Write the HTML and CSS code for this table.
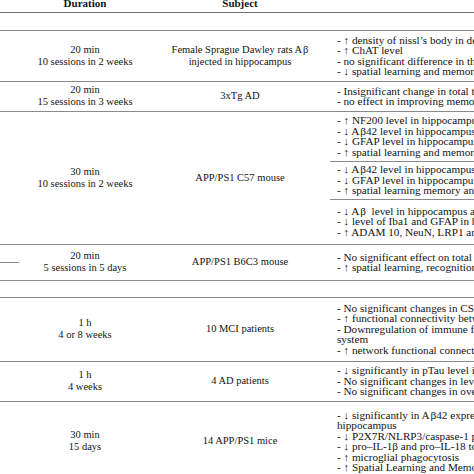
FILE: index.html
```html
<!DOCTYPE html>
<html>
<head>
<meta charset="utf-8">
<link rel="stylesheet" href="styles.css">
</head>
<body>
<table class="tbl">
  <colgroup>
    <col class="c0"><col class="c1"><col class="c2"><col class="c3">
  </colgroup>
  <tr class="h-head">
    <th></th><th>Duration</th><th>Subject</th><th>Results</th>
  </tr>
  <tr class="h-sec sec"><td></td><td></td><td></td><td></td></tr>
  <tr class="h-r1 row">
    <td></td>
    <td class="mid">20 min<br>10 sessions in 2 weeks</td>
    <td class="mid">Female Sprague Dawley rats A&#8202;β<br>injected in hippocampus</td>
    <td class="res">
      <div>- ↑ density of nissl’s body in dentate gyrus</div>
      <div>- ↑ ChAT level</div>
      <div>- no significant difference in the number of neurons</div>
      <div>- ↓ spatial learning and memory impairment</div>
    </td>
  </tr>
  <tr class="h-r2 row sep">
    <td></td>
    <td class="mid">20 min<br>15 sessions in 3 weeks</td>
    <td class="mid">3xTg AD</td>
    <td class="res">
      <div>- Insignificant change in total tau level</div>
      <div>- no effect in improving memory</div>
    </td>
  </tr>
  <tr class="h-r3a row sep">
    <td rowspan="3"></td>
    <td rowspan="3" class="mid">30 min<br>10 sessions in 2 weeks</td>
    <td rowspan="3" class="mid">APP/PS1 C57 mouse</td>
    <td class="res">
      <div>- ↑ NF200 level in hippocampus</div>
      <div>- ↓ A&#8202;β42 level in hippocampus</div>
      <div>- ↓ GFAP level in hippocampus</div>
      <div>- ↑ spatial learning and memory</div>
    </td>
  </tr>
  <tr class="h-r3b">
    <td class="res sub">
      <div>- ↓ A&#8202;β42 level in hippocampus</div>
      <div>- ↓ GFAP level in hippocampus</div>
      <div>- ↑ spatial learning memory and</div>
    </td>
  </tr>
  <tr class="h-r3c">
    <td class="res sub">
      <div>- ↓ A&#8202;β&nbsp; level in hippocampus and cortex</div>
      <div>- ↓ level of Iba1 and GFAP in hippocampus</div>
      <div>- ↑ ADAM 10, NeuN, LRP1 and</div>
    </td>
  </tr>
  <tr class="h-r4 row sep">
    <td><div class="dash"></div></td>
    <td class="mid">20 min<br>5 sessions in 5 days</td>
    <td class="mid">APP/PS1 B6C3 mouse</td>
    <td class="res">
      <div>- No significant effect on total A&#8202;β</div>
      <div>- ↑ spatial learning, recognition memory</div>
    </td>
  </tr>
  <tr class="h-sec2 sec sep"><td></td><td></td><td></td><td></td></tr>
  <tr class="h-r5 row sep">
    <td></td>
    <td class="mid">1 h<br>4 or 8 weeks</td>
    <td class="mid">10 MCI patients</td>
    <td class="res">
      <div>- No significant changes in CSF biomarkers</div>
      <div>- ↑ functional connectivity between</div>
      <div>- Downregulation of immune factors in the immune</div>
      <div>system</div>
      <div>- ↑ network functional connectivity</div>
    </td>
  </tr>
  <tr class="h-r6 row sep">
    <td></td>
    <td class="mid">1 h<br>4 weeks</td>
    <td class="mid">4 AD patients</td>
    <td class="res">
      <div>- ↓ significantly in pTau level in CSF</div>
      <div>- No significant changes in level of</div>
      <div>- No significant changes in overall</div>
    </td>
  </tr>
  <tr class="h-r7 row sep">
    <td></td>
    <td class="mid">30 min<br>15 days</td>
    <td class="mid">14 APP/PS1 mice</td>
    <td class="res">
      <div>- ↓ significantly in A&#8202;β42 expression in the</div>
      <div>hippocampus</div>
      <div>- ↓ P2X7R/NLRP3/caspase-1 pathway</div>
      <div>- ↓ pro–IL-1β and pro–IL-18 to</div>
      <div>- ↑ microglial phagocytosis</div>
      <div>- ↑ Spatial Learning and Memory</div>
    </td>
  </tr>
</table>
</body>
</html>
```

FILE: styles.css
```css
html, body {
  margin: 0;
  padding: 0;
  background: #ffffff;
}
body {
  width: 474px;
  height: 474px;
  overflow: hidden;
  font-family: "Liberation Serif", "DejaVu Serif", serif;
  font-size: 10.5px;
  color: #141414;
}
.tbl {
  border-collapse: collapse;
  table-layout: fixed;
  width: 730px;
  margin-top: -5px;
}
.c0 { width: 20px; }
.c1 { width: 130px; }
.c2 { width: 180px; }
.c3 { width: 400px; }
th, td {
  padding: 0;
  vertical-align: middle;
}
th {
  font-weight: bold;
  text-align: center;
  font-size: 11px;
  border-bottom: 1px solid #6f6f6f;
}
.mid {
  text-align: center;
  line-height: 12px;
  white-space: nowrap;
}
.res {
  text-align: left;
  font-size: 11.2px;
  line-height: 10.5px;
  padding-left: 7px;
  white-space: nowrap;
}
.sep td {
  border-top: 1.5px solid #8a8a8a;
}
.sec td {
  border-bottom: 1.5px solid #8a8a8a;
}
.h-r3b .sub, .h-r3c .sub {
  border-top: 1px solid #8a8a8a;
}
.dash {
  width: 19px;
  border-top: 1px solid #8a8a8a;
}
.h-head { height: 17px; }
.h-sec { height: 18px; }
.h-r1 { height: 51px; }
.h-r2 { height: 30px; }
.h-r3a { height: 50px; }
.h-r3b { height: 38px; }
.h-r3c { height: 45px; }
.h-r4 { height: 36px; }
.h-sec2 { height: 17px; }
.h-r5 { height: 64px; }
.h-r6 { height: 40px; }
.h-r7 { height: 80px; }
```
